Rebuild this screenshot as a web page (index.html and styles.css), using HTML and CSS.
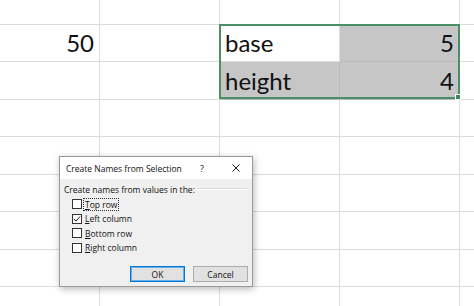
FILE: index.html
```html
<!DOCTYPE html>
<html lang="en">
<head>
<meta charset="utf-8">
<title>Create Names from Selection</title>
<link rel="stylesheet" href="styles.css">
</head>
<body>
<div class="page">
  <div class="sheet">
    <div class="cell"></div><div class="cell"></div><div class="cell"></div><div class="cell"></div><div class="cell"></div>
    <div class="cell num">50</div><div class="cell"></div><div class="cell active">base<div class="selection"></div></div><div class="cell num sel">5</div><div class="cell"></div>
    <div class="cell"></div><div class="cell"></div><div class="cell sel">height</div><div class="cell num sel">4</div><div class="cell"></div>
    <div class="cell"></div><div class="cell"></div><div class="cell"></div><div class="cell"></div><div class="cell"></div>
    <div class="cell"></div><div class="cell"></div><div class="cell"></div><div class="cell"></div><div class="cell"></div>
    <div class="cell"></div><div class="cell"></div><div class="cell"></div><div class="cell"></div><div class="cell"></div>
    <div class="cell"></div><div class="cell"></div><div class="cell"></div><div class="cell"></div><div class="cell"></div>
    <div class="cell"></div><div class="cell"></div><div class="cell"></div><div class="cell"></div><div class="cell"></div>
    <div class="cell"></div><div class="cell"></div><div class="cell"></div><div class="cell"></div><div class="cell"></div>
  </div>

  <div class="dialog">
    <div class="titlebar">
      <span class="title">Create Names from Selection</span>
      <span class="help">?</span>
      <span class="close"><svg width="8" height="8" viewBox="0 0 8 8"><path d="M0.5 0.5 L7.5 7.5 M7.5 0.5 L0.5 7.5" stroke="#1a1a1a" stroke-width="1" fill="none"/></svg></span>
    </div>
    <div class="dlg-body">
      <div class="group-label"><span>Create names from values in the:</span><span class="rule"></span></div>
      <ul class="options">
        <li><span class="box"></span><span class="label focus"><u>T</u>op row</span></li>
        <li><span class="box"><svg width="8" height="8" viewBox="0 0 8 8"><path d="M1 4 L3 6.2 L7 1.5" stroke="#222" stroke-width="1" fill="none"/></svg></span><span class="label"><u>L</u>eft column</span></li>
        <li><span class="box"></span><span class="label"><u>B</u>ottom row</span></li>
        <li><span class="box"></span><span class="label"><u>R</u>ight column</span></li>
      </ul>
      <div class="buttons">
        <button class="btn default">OK</button>
        <button class="btn">Cancel</button>
      </div>
    </div>
  </div>
</div>
</body>
</html>
```

FILE: styles.css
```css
html, body {
  margin: 0;
  padding: 0;
  background: #ffffff;
}

.page {
  position: relative;
  width: 474px;
  height: 306px;
  overflow: hidden;
}

.sheet {
  display: grid;
  grid-template-columns: 100px 120px 120px 120px 120px;
  grid-template-rows: 25px 37px 38px 37px 38px 37px 38px 37px 38px;
  width: 474px;
  height: 306px;
  overflow: hidden;
}

.cell {
  box-sizing: border-box;
  border-right: 1px solid #dcdcdc;
  border-bottom: 1px solid #dcdcdc;
  display: flex;
  align-items: flex-end;
  padding: 0 5px 4px 5px;
  font-family: Lato, "Liberation Sans", sans-serif;
  font-size: 24px;
  line-height: 28px;
  color: #111;
  white-space: nowrap;
}

.cell.num {
  justify-content: flex-end;
}

.cell.sel {
  background: #c6c6c6;
  border-color: #b9b9b9;
}

.cell.active {
  position: relative;
  background: #ffffff;
}

.selection {
  position: absolute;
  left: -1px;
  top: -1px;
  width: 241px;
  height: 75px;
  box-sizing: border-box;
  border: 2px solid #4b8f66;
}

.selection::after {
  content: "";
  position: absolute;
  right: -3px;
  bottom: -3px;
  width: 4px;
  height: 4px;
  background: #3f8a5c;
  border: 1px solid #ffffff;
}

/* Dialog */
.dialog {
  position: absolute;
  left: 59px;
  top: 156px;
  width: 194px;
  height: 131px;
  box-sizing: border-box;
  border: 1px solid #9a9a9a;
  background: #f0f0f0;
  box-shadow: 1px 2px 7px rgba(0, 0, 0, 0.28);
  display: flex;
  flex-direction: column;
  font-family: "Open Sans", "Noto Sans", sans-serif;
  font-size: 8.5px;
  color: #111;
}

.titlebar {
  height: 22px;
  background: #ffffff;
  display: flex;
  align-items: center;
  padding-left: 6px;
  font-size: 8.5px;
}

.title {
  flex: 1;
}

.help {
  width: 10px;
  text-align: center;
  margin-right: 25px;
  font-size: 9px;
}

.close {
  width: 8px;
  height: 8px;
  margin-right: 12px;
  display: flex;
}

.dlg-body {
  flex: 1;
  display: flex;
  flex-direction: column;
  padding: 4px 4px 4px 4px;
}

.group-label {
  display: flex;
  align-items: center;
  height: 12px;
  gap: 2px;
}

.rule {
  flex: 1;
  height: 0;
  border-top: 1px solid #d9d9d9;
  border-bottom: 1px solid #ffffff;
  margin-right: 1px;
}

.options {
  list-style: none;
  margin: 2px 0 0 0;
  padding: 0 0 0 8px;
}

.options li {
  height: 14.5px;
  display: flex;
  align-items: center;
}

.box {
  box-sizing: border-box;
  width: 10px;
  height: 10px;
  border: 1px solid #333333;
  background: #ffffff;
  display: flex;
  align-items: center;
  justify-content: center;
  margin-right: 1px;
}

.label {
  padding: 0 1px;
  line-height: 11px;
  border: 1px solid transparent;
}

.label.focus {
  border: 1px dotted #333333;
}

.buttons {
  margin-top: auto;
  display: flex;
  justify-content: flex-end;
  gap: 8px;
}

.btn {
  box-sizing: border-box;
  width: 55px;
  height: 16px;
  padding: 0;
  background: #e1e1e1;
  border: 1px solid #adadad;
  font-family: "Open Sans", "Noto Sans", sans-serif;
  font-size: 8.5px;
  color: #111;
}

.btn.default {
  border: 1px solid #0078d7;
  box-shadow: inset 0 0 0 1px #6aaee6;
}
```
